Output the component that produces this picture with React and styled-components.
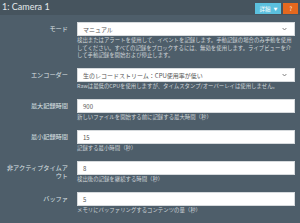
import React from "react";
import styled, { createGlobalStyle } from "styled-components";

const Global = createGlobalStyle`
  html, body { margin: 0; padding: 0; }
  body {
    background: #4e5e6a;
    font-family: "Noto Sans CJK JP", "Noto Sans", sans-serif;
    width: 300px;
    height: 223px;
    overflow: hidden;
  }
`;

const Page = styled.div`
  width: 300px;
  height: 223px;
  background: #4e5e6a;
  display: flex;
  flex-direction: column;
`;

const Header = styled.div`
  height: 19px;
  background: #46545e;
  display: flex;
  align-items: center;
  justify-content: space-between;
  padding: 0 2px 0 2px;
  box-sizing: border-box;
`;

const Title = styled.div`
  font-family: Lato, "Noto Sans", sans-serif;
  font-size: 9px;
  color: #e4e8ea;
  margin-top: -2px;
`;

const Buttons = styled.div`
  display: flex;
  gap: 2px;
  align-self: flex-start;
  margin-top: 3px;
`;

const Btn = styled.div`
  height: 11px;
  padding: 0 ${(p) => p.$px}px;
  background: ${(p) => p.$bg};
  color: #fff;
  font-size: 5.5px;
  display: flex;
  align-items: center;
  gap: 3px;
`;

const Caret = styled.span`
  font-size: 4px;
`;

const Form = styled.div`
  padding-top: 7px;
  display: flex;
  flex-direction: column;
`;

const Row = styled.div`
  display: grid;
  grid-template-columns: 68px 218px;
  column-gap: 9px;
  margin-bottom: 8.5px;
`;

const Label = styled.div`
  text-align: right;
  color: #dde2e5;
  font-size: 6.2px;
  line-height: 8px;
  padding: 3px 0 0 4px;
`;

const Field = styled.div`
  display: flex;
  flex-direction: column;
`;

const Input = styled.div`
  height: 14px;
  background: #fff;
  border: 1px solid #d6dadd;
  box-sizing: border-box;
  display: flex;
  align-items: center;
  justify-content: space-between;
  padding: 0 7px 0 5px;
  color: #555;
  font-size: 6px;
`;

const Help = styled.div`
  margin-top: 1px;
  color: #cfd5d9;
  font-size: 5.4px;
  line-height: 7.5px;
  white-space: nowrap;
`;

const Chevron = () => (
  <svg width="5" height="4" viewBox="0 0 5 4">
    <path d="M0.6 1 L2.5 3 L4.4 1" fill="none" stroke="#777" strokeWidth="0.9" />
  </svg>
);

const rows = [
  {
    label: "モード",
    value: "マニュアル",
    select: true,
    help: [
      "検出またはアラートを使用して、イベントを記録します。手動記録の場合のみ手動を使用",
      "してください。すべての記録をブロックするには、無効を使用します。ライブビューを介",
      "して手動記録を開始および停止します。",
    ],
  },
  {
    label: "エンコーダー",
    value: "生のレコードストリーム：CPU使用率が低い",
    select: true,
    help: ["Rawは最低のCPUを使用しますが、タイムスタンプ/オーバーレイは使用しません。"],
  },
  { label: "最大記録時間", value: "900", help: ["新しいファイルを開始する前に記録する最大時間（秒）"] },
  { label: "最小記録時間", value: "15", help: ["記録する最小時間（秒）"] },
  { label: "非アクティブタイムアウト", value: "8", help: ["検出後の記録を継続する時間（秒）"] },
  { label: "バッファ", value: "5", help: ["メモリにバッファリングするコンテンツの量（秒）"] },
];

export default function App() {
  return (
    <>
      <Global />
      <Page>
        <Header>
          <Title>1: Camera 1</Title>
          <Buttons>
            <Btn $bg="#5bc0de" $px={4}>
              詳細
              <Caret>▼</Caret>
            </Btn>
            <Btn $bg="#e4681f" $px={6}>?</Btn>
          </Buttons>
        </Header>
        <Form>
          {rows.map((r) => (
            <Row key={r.label}>
              <Label>{r.label}</Label>
              <Field>
                <Input>
                  <span>{r.value}</span>
                  {r.select && <Chevron />}
                </Input>
                <Help>
                  {r.help.map((line, i) => (
                    <div key={i}>{line}</div>
                  ))}
                </Help>
              </Field>
            </Row>
          ))}
        </Form>
      </Page>
    </>
  );
}
